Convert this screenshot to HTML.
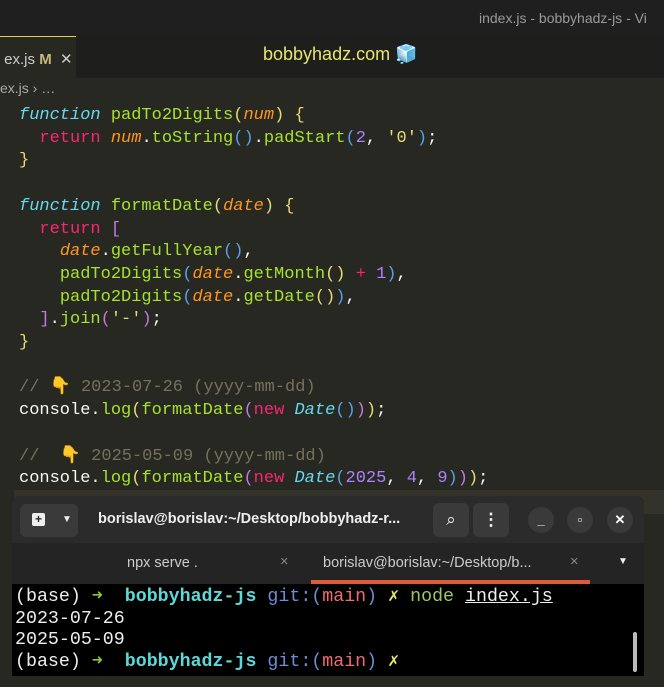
<!DOCTYPE html>
<html><head><meta charset="utf-8"><style>
*{margin:0;padding:0;box-sizing:border-box}
body{width:664px;height:687px;overflow:hidden;background:#272822;font-family:"Liberation Sans",sans-serif;position:relative}
.title{position:absolute;top:0;left:0;width:664px;height:36px;background:#1f1f1f;color:#9a9a9a;font-size:14px}
.title span{position:absolute;left:479px;top:10px;white-space:nowrap}
.tabs{position:absolute;top:36px;left:0;width:664px;height:42px;background:#1e1f1c}
.tab{position:absolute;left:0;top:0;width:76px;height:42px;background:#272822;border-top:1px solid #d7d74a;color:#ccc;font-size:15px;padding:13px 0 0 0}
.brand{position:absolute;left:263px;top:44px;color:#e6e66c;font-size:18px}
.crumb{position:absolute;top:80px;left:0;color:#aaa;font-size:14px}
pre{position:absolute;left:19px;top:105px;font-family:"Liberation Mono",monospace;font-size:17px;line-height:22.7px;color:#f8f8f2}
.k{color:#66d9ef;font-style:italic}.f{color:#a6e22e}.p{color:#fd971f;font-style:italic}.r{color:#f92672}.y{color:#e6db74}.b{color:#5aa0e6}.m{color:#ae81ff}.c{color:#75715e}.pk{color:#c678dd}
.hl{position:absolute;left:14px;top:490px;width:650px;height:24px;background:#33332c}
.term{position:absolute;left:12px;top:496px;width:632px;height:180px;background:#000;border-radius:8px 8px 0 0;overflow:hidden}
.th{position:absolute;left:0;top:0;width:632px;height:47px;background:#2b2b2b}
.tt{position:absolute;left:0;top:47px;width:632px;height:41px;background:#242424;color:#ccc;font-size:14.5px}
.btn{position:absolute;background:#3a3a3a;border-radius:6px}
.circ{position:absolute;width:26px;height:26px;border-radius:13px;background:#3a3a3a;color:#fff;font-size:13px;text-align:center;line-height:26px;font-weight:bold}
.tc{position:absolute;left:3px;top:91px;font-family:"Liberation Mono",monospace;font-size:18.3px;line-height:21.7px;color:#eee;white-space:pre}
.g{color:#8ec63f}.cy{color:#5fd7d7;font-weight:bold}.bl{color:#6b8ed6}.rd{color:#ef6b73}.yl{color:#e6e66c}.gr{color:#9ec65f}
</style></head><body>
<div class="title"><span>index.js - bobbyhadz-js - Vi</span></div>
<div class="tabs"><div class="tab">&nbsp;ex.js <b style="color:#c8b87a">M</b>&nbsp; ✕</div></div>
<div class="brand">bobbyhadz.com 🧊</div>
<div class="crumb">ex.js › …</div>
<div class="hl"></div>
<pre><span class="k">function</span> <span class="f">padTo2Digits</span><span class="y">(</span><span class="p">num</span><span class="y">)</span> <span class="y">{</span>
  <span class="r">return</span> <span class="p">num</span>.<span class="f">toString</span><span class="b">()</span>.<span class="f">padStart</span><span class="b">(</span><span class="m">2</span>, <span class="y">'0'</span><span class="b">)</span>;
<span class="y">}</span>

<span class="k">function</span> <span class="f">formatDate</span><span class="y">(</span><span class="p">date</span><span class="y">)</span> <span class="y">{</span>
  <span class="r">return</span> <span class="pk">[</span>
    <span class="p">date</span>.<span class="f">getFullYear</span><span class="b">()</span>,
    <span class="f">padTo2Digits</span><span class="b">(</span><span class="p">date</span>.<span class="f">getMonth</span><span class="y">()</span> <span class="r">+</span> <span class="m">1</span><span class="b">)</span>,
    <span class="f">padTo2Digits</span><span class="b">(</span><span class="p">date</span>.<span class="f">getDate</span><span class="y">()</span><span class="b">)</span>,
  <span class="pk">]</span>.<span class="f">join</span><span class="pk">(</span><span class="y">'-'</span><span class="pk">)</span>;
<span class="y">}</span>

<span class="c">// 👇 2023-07-26 (yyyy-mm-dd)</span>
console.<span class="f">log</span><span class="y">(</span><span class="f">formatDate</span><span class="pk">(</span><span class="r">new</span> <span class="k">Date</span><span class="b">()</span><span class="pk">)</span><span class="y">)</span>;

<span class="c">//  👇 2025-05-09 (yyyy-mm-dd)</span>
console.<span class="f">log</span><span class="y">(</span><span class="f">formatDate</span><span class="pk">(</span><span class="r">new</span> <span class="k">Date</span><span class="b">(</span><span class="m">2025</span>, <span class="m">4</span>, <span class="m">9</span><span class="b">)</span><span class="pk">)</span><span class="y">)</span>;</pre>
<div class="term">
 <div class="th">
  <div class="btn" style="left:8px;top:8px;width:58px;height:33px"></div>
  <div style="position:absolute;left:20px;top:17px;width:13px;height:13px;background:#eee;border-radius:2px;color:#2b2b2b;font-size:12px;line-height:13px;text-align:center;font-weight:bold">+</div>
  <div style="position:absolute;left:50px;top:18px;color:#eee;font-size:10px">▼</div>
  <div style="position:absolute;left:86px;top:15px;color:#eee;font-size:14.5px;font-weight:bold;white-space:nowrap">borislav@borislav:~/Desktop/bobbyhadz-r...</div>
  <div class="btn" style="left:421px;top:7px;width:36px;height:34px;color:#eee;text-align:center;line-height:34px;font-size:17px">⌕</div>
  <div class="btn" style="left:461px;top:7px;width:36px;height:34px;color:#eee;text-align:center;line-height:34px;font-size:17px;font-weight:bold">⋮</div>
  <div class="circ" style="left:516px;top:11px">_</div>
  <div class="circ" style="left:555px;top:11px">▫</div>
  <div class="circ" style="left:595px;top:11px">✕</div>
 </div>
 <div class="tt">
  <span style="position:absolute;left:115px;top:12px">npx serve .</span>
  <span style="position:absolute;left:268px;top:11px;color:#888">×</span>
  <span style="position:absolute;left:311px;top:12px;white-space:nowrap">borislav@borislav:~/Desktop/b...</span>
  <span style="position:absolute;left:558px;top:11px;color:#888">×</span>
  <span style="position:absolute;left:606px;top:13px;font-size:10px;color:#eee">▼</span>
  <div style="position:absolute;left:299px;top:37px;width:279px;height:4px;background:#e05a3a"></div>
 </div>
 <div class="tc">(base) <span class="g">➜</span>  <span class="cy">bobbyhadz-js</span> <span class="bl">git:(</span><span class="rd">main</span><span class="bl">)</span> <span class="yl">✗</span> <span class="gr">node</span> <u>index.js</u>
2023-07-26
2025-05-09
(base) <span class="g">➜</span>  <span class="cy">bobbyhadz-js</span> <span class="bl">git:(</span><span class="rd">main</span><span class="bl">)</span> <span class="yl">✗</span></div>
 <div style="position:absolute;left:621px;top:136px;width:4px;height:40px;background:#bbb;border-radius:2px"></div>
</div>
</body></html>
